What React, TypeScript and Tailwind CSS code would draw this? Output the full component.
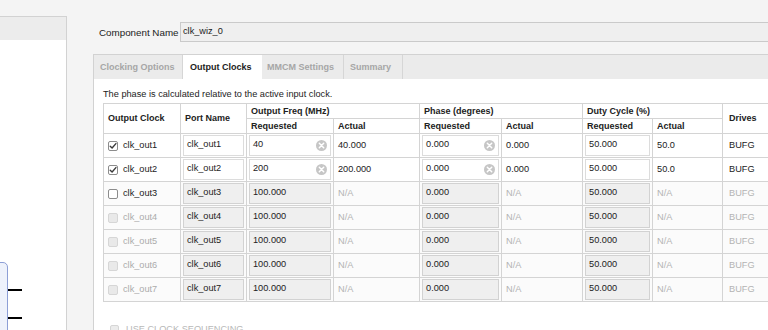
import React from "react";

type Row = {
  name: string;
  cb: "checked" | "unchecked" | "disabled";
  active: boolean;
  freq: string;
  act: string;
  phase: string;
  pact: string;
  duty: string;
  dact: string;
};

const rows: Row[] = [
  { name: "clk_out1", cb: "checked", active: true, freq: "40", act: "40.000", phase: "0.000", pact: "0.000", duty: "50.000", dact: "50.0" },
  { name: "clk_out2", cb: "checked", active: true, freq: "200", act: "200.000", phase: "0.000", pact: "0.000", duty: "50.000", dact: "50.0" },
  { name: "clk_out3", cb: "unchecked", active: false, freq: "100.000", act: "N/A", phase: "0.000", pact: "N/A", duty: "50.000", dact: "N/A" },
  { name: "clk_out4", cb: "disabled", active: false, freq: "100.000", act: "N/A", phase: "0.000", pact: "N/A", duty: "50.000", dact: "N/A" },
  { name: "clk_out5", cb: "disabled", active: false, freq: "100.000", act: "N/A", phase: "0.000", pact: "N/A", duty: "50.000", dact: "N/A" },
  { name: "clk_out6", cb: "disabled", active: false, freq: "100.000", act: "N/A", phase: "0.000", pact: "N/A", duty: "50.000", dact: "N/A" },
  { name: "clk_out7", cb: "disabled", active: false, freq: "100.000", act: "N/A", phase: "0.000", pact: "N/A", duty: "50.000", dact: "N/A" },
];

function ClearIcon() {
  return (
    <svg width="11" height="11" viewBox="0 0 11 11" className="shrink-0">
      <circle cx="5.5" cy="5.5" r="5.5" fill="#c6c6c6" />
      <path d="M3.3 3.3 L7.7 7.7 M7.7 3.3 L3.3 7.7" stroke="#ffffff" strokeWidth="1.5" strokeLinecap="round" />
    </svg>
  );
}

function Checkbox({ state }: { state: Row["cb"] }) {
  if (state === "disabled") {
    return <div className="w-[10px] h-[10px] rounded-[2px] border border-[#d6d6d6] bg-[#e9e9e9] shrink-0" />;
  }
  return (
    <div className="w-[10px] h-[10px] rounded-[2px] border border-[#8c8c8c] bg-white shrink-0 flex items-center justify-center">
      {state === "checked" && (
        <svg width="8" height="8" viewBox="0 0 8 8">
          <path d="M1.2 4.2 L3.1 6 L6.9 1.6" fill="none" stroke="#3a3a3a" strokeWidth="1.4" strokeLinecap="round" strokeLinejoin="round" />
        </svg>
      )}
    </div>
  );
}

function Field({ value, enabled, clear }: { value: string; enabled: boolean; clear?: boolean }) {
  return (
    <div
      className={
        enabled
          ? "h-[21px] border border-[#dcdcdc] bg-white flex items-center justify-between pl-[3px] pr-[3px] text-[#222]"
          : "h-[21px] border border-[#d2d2d2] bg-[#efefef] flex items-center pl-[3px] pr-[3px] text-[#222]"
      }
    >
      <span className="-mt-[2px]">{value}</span>
      {enabled && clear && <ClearIcon />}
    </div>
  );
}

export default function App() {
  const th = "border border-[#d4d4d4] text-left font-bold align-middle pl-[4px] py-0 text-[#222] whitespace-nowrap";
  const td = "border border-[#d4d4d4] align-middle p-0 whitespace-nowrap";
  return (
    <div className="w-[768px] h-[330px] overflow-hidden bg-[#f4f4f4] flex text-[9.2px] leading-[11px] text-[#222] font-['Liberation_Sans',Arial,sans-serif]">
      {/* left panel */}
      <div className="w-[67px] shrink-0 pt-[16px] flex flex-col">
        <div className="flex-1 flex flex-col border-t border-r border-[#d2d2d2]">
          <div className="h-[23px] bg-[#ececec]" />
          <div className="flex-1 bg-white relative">
            <div className="absolute left-[-12px] top-[222px] w-[20px] h-[120px] rounded-[5px] border border-[#8d9fd6] bg-[#eef2fb]" />
            <div className="absolute left-[8px] top-[249px] w-[14px] h-[2px] bg-black" />
            <div className="absolute left-[8px] top-[277px] w-[14px] h-[2px] bg-black" />
          </div>
        </div>
      </div>

      {/* right area */}
      <div className="flex-1 min-w-0 flex flex-col pl-[26px]">
        <div className="mt-[22px] h-[20px] flex items-center">
          <div className="w-[87px] pl-[6px] text-[9.8px] shrink-0 whitespace-nowrap">Component Name</div>
          <div className="flex-1 h-[20px] border border-[#cacaca] bg-[#efefef] flex items-center pl-[2px] -mr-[2px]">
            <span className="-mt-[1px]">clk_wiz_0</span>
          </div>
        </div>

        <div className="mt-[12px] flex-1 min-h-0 flex flex-col border-t border-l border-[#d2d2d2] bg-white overflow-hidden">
          {/* tabs */}
          <div className="h-[24px] shrink-0 bg-[#ebebeb] flex font-bold text-[9px] whitespace-nowrap">
            <div className="w-[89px] pl-[6px] flex items-center border-r border-[#d6d6d6] text-[#a6a6a6]">Clocking Options</div>
            <div className="w-[79px] pl-[7px] flex items-center bg-white text-[#222]">Output Clocks</div>
            <div className="w-[82px] pl-[5px] flex items-center border-r border-[#d6d6d6] text-[#a6a6a6]">MMCM Settings</div>
            <div className="w-[59px] pl-[6px] flex items-center border-r border-[#d6d6d6] text-[#a6a6a6]">Summary</div>
          </div>

          {/* content */}
          <div className="pl-[9px] pt-[10px]">
            <div className="whitespace-nowrap">The phase is calculated relative to the active input clock.</div>
            <table className="mt-[3px] border-collapse table-fixed w-[689px]">
              <colgroup>
                <col className="w-[77px]" />
                <col className="w-[66px]" />
                <col className="w-[87px]" />
                <col className="w-[86px]" />
                <col className="w-[82px]" />
                <col className="w-[81px]" />
                <col className="w-[70px]" />
                <col className="w-[70px]" />
                <col className="w-[70px]" />
              </colgroup>
              <thead className="text-[9px]">
                <tr className="h-[15px]">
                  <th rowSpan={2} className={th}>Output Clock</th>
                  <th rowSpan={2} className={th}>Port Name</th>
                  <th colSpan={2} className={th}>Output Freq (MHz)</th>
                  <th colSpan={2} className={th}>Phase (degrees)</th>
                  <th colSpan={2} className={th}>Duty Cycle (%)</th>
                  <th rowSpan={2} className={th + " !pl-[6px]"}>Drives</th>
                </tr>
                <tr className="h-[15px]">
                  <th className={th}>Requested</th>
                  <th className={th}>Actual</th>
                  <th className={th}>Requested</th>
                  <th className={th}>Actual</th>
                  <th className={th}>Requested</th>
                  <th className={th}>Actual</th>
                </tr>
              </thead>
              <tbody>
                {rows.map((r) => (
                  <tr key={r.name} className={r.active ? "h-[24px] bg-white" : "h-[24px] bg-[#fbfbfb]"}>
                    <td className={td}>
                      <div className="flex items-center pl-[4px] gap-[5px]">
                        <Checkbox state={r.cb} />
                        <span className={r.cb === "disabled" ? "text-[#ababab]" : "text-[#222]"}>{r.name}</span>
                      </div>
                    </td>
                    <td className={td + " px-[2px]"}>
                      <Field value={r.name} enabled={r.active} />
                    </td>
                    <td className={td + " px-[2px]"}>
                      <Field value={r.freq} enabled={r.active} clear />
                    </td>
                    <td className={td + " pl-[4px]"}>
                      <span className={r.active ? "text-[#222]" : "text-[#b3b3b3]"}>{r.act}</span>
                    </td>
                    <td className={td + " px-[2px]"}>
                      <Field value={r.phase} enabled={r.active} clear />
                    </td>
                    <td className={td + " pl-[4px]"}>
                      <span className={r.active ? "text-[#222]" : "text-[#b3b3b3]"}>{r.pact}</span>
                    </td>
                    <td className={td + " px-[2px]"}>
                      <Field value={r.duty} enabled={r.active} />
                    </td>
                    <td className={td + " pl-[4px]"}>
                      <span className={r.active ? "text-[#222]" : "text-[#b3b3b3]"}>{r.dact}</span>
                    </td>
                    <td className={td + " pl-[6px]"}>
                      <span className={r.active ? "text-[#222]" : "text-[#b3b3b3]"}>BUFG</span>
                    </td>
                  </tr>
                ))}
              </tbody>
            </table>
            <div className="mt-[22px] flex items-center pl-[7px] gap-[7px] text-[#b8b8b8] whitespace-nowrap">
              <div className="w-[9px] h-[9px] rounded-[2px] border border-[#d6d6d6] bg-[#ececec]" />
              <span>USE CLOCK SEQUENCING</span>
            </div>
          </div>
        </div>
      </div>
    </div>
  );
}
